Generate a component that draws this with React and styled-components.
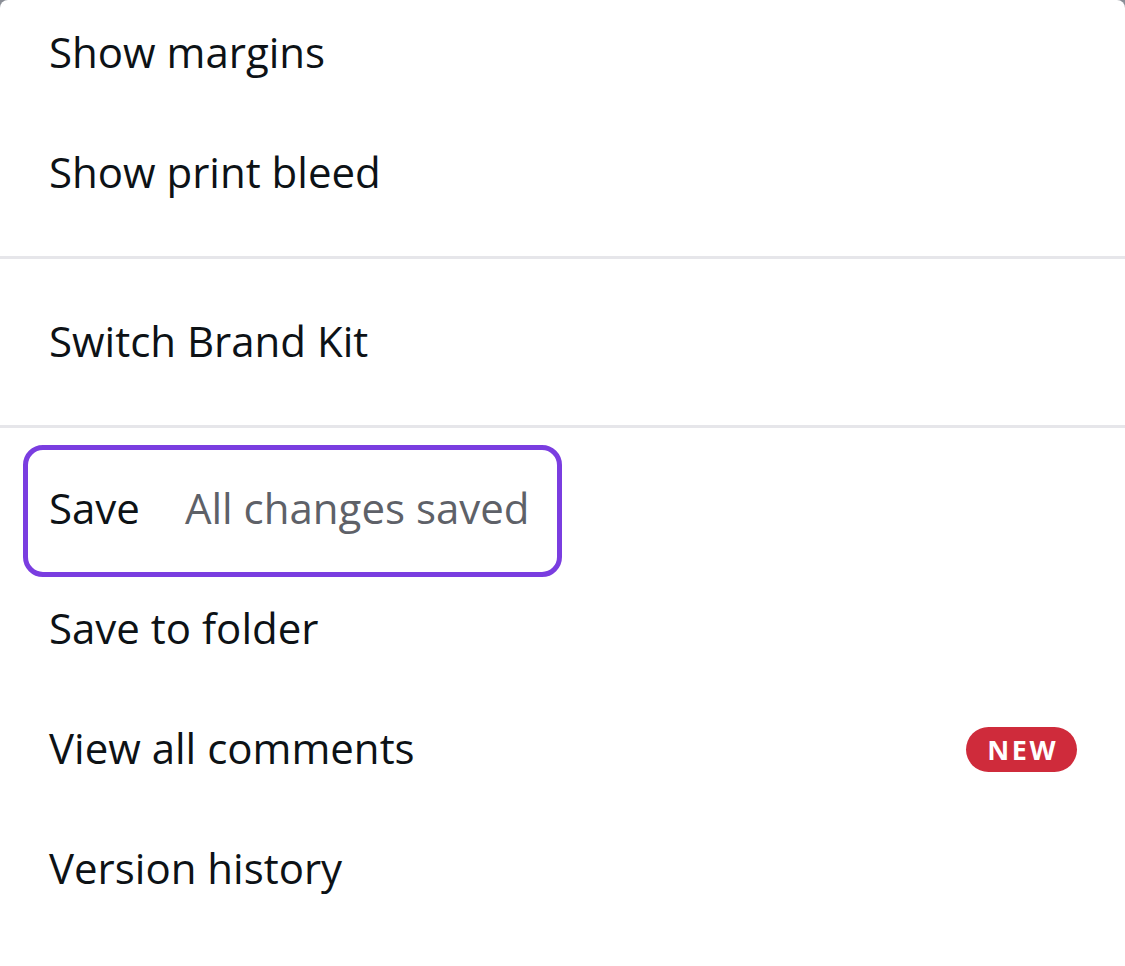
import styled, { createGlobalStyle } from 'styled-components';

const GlobalStyle = createGlobalStyle`
  html, body {
    margin: 0;
    padding: 0;
    background: #8a8e96;
  }
  body {
    font-family: 'Open Sans', 'Noto Sans', sans-serif;
    -webkit-font-smoothing: antialiased;
  }
`;

const Sheet = styled.div`
  background: #ffffff;
  height: 966px;
  overflow: hidden;
  border-radius: 8px 8px 0 0;
`;

// list is scrolled a few pixels past its top edge
const MenuList = styled.ul`
  list-style: none;
  margin: -9px 0 0;
  padding: 0;
`;

const MenuItem = styled.li`
  display: flex;
  align-items: center;
  justify-content: space-between;
  height: 120px;
  padding: 0 48px 0 49px;
  font-size: 42px;
  color: #0d1216;
  cursor: pointer;
`;

const Divider = styled.li`
  height: 3px;
  margin: 25px 0 ${(p) => p.$after || 21}px;
  background: #e6e6ea;
`;

const FocusRow = styled.li`
  display: flex;
  align-items: center;
  height: 120px;
  padding-left: 23px;
`;

const SaveButton = styled.button`
  display: flex;
  align-items: center;
  gap: 45px;
  height: 132px;
  margin-top: 8px;
  box-sizing: border-box;
  padding: 0 27px 8px 21px;
  border: 5px solid #7a3de0;
  border-radius: 20px;
  background: transparent;
  font: inherit;
  font-size: 42px;
  color: #0d1216;
  cursor: pointer;
`;

const Status = styled.span`
  color: #5e6168;
`;

const Badge = styled.span`
  display: inline-flex;
  align-items: center;
  justify-content: center;
  height: 45px;
  margin-top: 5px;
  padding: 0 19px 0 21px;
  border-radius: 23px;
  background: #cf2b3b;
  color: #ffffff;
  font-size: 27px;
  font-weight: 700;
  letter-spacing: 2.5px;
`;

export default function App() {
  return (
    <>
      <GlobalStyle />
      <Sheet>
        <MenuList>
          <MenuItem>Show margins</MenuItem>
          <MenuItem>Show print bleed</MenuItem>
          <Divider />
          <MenuItem>Switch Brand Kit</MenuItem>
          <Divider $after={19} />
          <FocusRow>
            <SaveButton>
              <span>Save</span>
              <Status>All changes saved</Status>
            </SaveButton>
          </FocusRow>
          <MenuItem>Save to folder</MenuItem>
          <MenuItem>
            <span>View all comments</span>
            <Badge>NEW</Badge>
          </MenuItem>
          <MenuItem>Version history</MenuItem>
        </MenuList>
      </Sheet>
    </>
  );
}
